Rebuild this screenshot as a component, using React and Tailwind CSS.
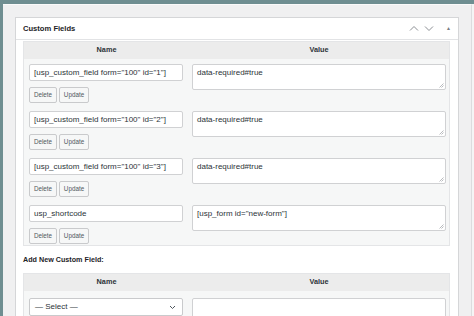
const ROWS = [
  { name: '[usp_custom_field form="100" id="1"]', value: 'data-required#true' },
  { name: '[usp_custom_field form="100" id="2"]', value: 'data-required#true' },
  { name: '[usp_custom_field form="100" id="3"]', value: 'data-required#true' },
  { name: 'usp_shortcode', value: '[usp_form id="new-form"]', last: true },
];

function Grip() {
  return (
    <svg className="absolute right-[1px] bottom-[1px]" width="5" height="5" viewBox="0 0 5 5">
      <path d="M4.5 0.5L0.5 4.5M4.5 2.5L2.5 4.5" stroke="#a7aaad" strokeWidth="0.8" />
    </svg>
  );
}

function TextBox({ value }) {
  return (
    <div className="relative w-[254px] h-[26px] bg-white border border-[#d0d1d3] rounded-[2px] px-[4px] pt-[3px] text-[8px] leading-[10px] text-[#2c3338]">
      {value}
      <Grip />
    </div>
  );
}

function SmallButton({ label, w }) {
  return (
    <div className={`${w} h-[16px] flex items-center justify-center bg-[#f6f7f7] border border-[#c9cacc] rounded-[2px] text-[6.3px] text-[#50575e]`}>
      {label}
    </div>
  );
}

function HeaderRow() {
  return (
    <div className="flex h-[17px] bg-[#ececec] text-[7.3px] font-bold text-[#2c3338]">
      <div className="w-[165px] flex items-center justify-center">Name</div>
      <div className="flex-1 flex items-center justify-center">Value</div>
    </div>
  );
}

function FieldRow({ name, value, last }) {
  return (
    <div className={`flex ${last ? 'h-[45px]' : 'h-[47px]'} pt-[5px]`}>
      <div className="w-[165px] pl-[5px] flex flex-col gap-[6px]">
        <div className="w-[154px] h-[17px] bg-white border border-[#d0d1d3] rounded-[2px] pl-[4px] flex items-center text-[8px] text-[#2c3338] whitespace-nowrap">
          {name}
        </div>
        <div className="flex gap-[2px]">
          <SmallButton label="Delete" w="w-[28px]" />
          <SmallButton label="Update" w="w-[30px]" />
        </div>
      </div>
      <div className="flex-1 pl-[3px]">
        <TextBox value={value} />
      </div>
    </div>
  );
}

function Chevron({ up }) {
  return (
    <svg width="10" height="7" viewBox="0 0 10 7" fill="none">
      <path d={up ? 'M1 5.5L5 1.5L9 5.5' : 'M1 1.5L5 5.5L9 1.5'} stroke="#8c8f94" strokeWidth="1" />
    </svg>
  );
}

export default function App() {
  return (
    <div className="w-[474px] h-[316px] overflow-hidden bg-[#6f8e91] pt-[4px] pl-[3px] font-['Liberation_Sans',Arial,sans-serif]">
      <div className="flex h-full">
        <div className="w-[469px] h-full bg-[#f0f0f1] border-t border-[#fafafa] border-r border-r-[#dcdcde] pl-[12px] pt-[12px]">
          <div className="w-[444px] h-[400px] bg-white border border-[#d5d6d8]">
            <div className="h-[22px] flex items-center border-b border-[#e2e3e5] pl-[7px] pr-[7px]">
              <span className="text-[7.6px] font-bold text-[#1d2327]">Custom Fields</span>
              <div className="ml-auto flex items-center gap-[5px]">
                <Chevron up />
                <Chevron />
                <span className="ml-[7px] text-[5px] text-[#787c82]">▲</span>
              </div>
            </div>
            <div className="pl-[7px] pt-[1px]">
              <div className="w-[427px] bg-[#f6f7f7] border border-[#e4e5e7]">
                <HeaderRow />
                {ROWS.map((r) => (
                  <FieldRow key={r.name} {...r} />
                ))}
              </div>
              <div className="h-[27px] pt-[2px] flex items-center text-[7.2px] font-bold text-[#1d2327]">
                Add New Custom Field:
              </div>
              <div className="w-[427px] h-[80px] bg-[#f6f7f7] border border-[#e4e5e7]">
                <HeaderRow />
                <div className="flex pt-[7px]">
                  <div className="w-[165px] pl-[5px]">
                    <div className="w-[154px] h-[18px] bg-white border border-[#c9cacc] rounded-[2px] pl-[5px] pr-[6px] flex items-center justify-between text-[8px] text-[#2c3338]">
                      <span>— Select —</span>
                      <svg width="7" height="5" viewBox="0 0 7 5" fill="none">
                        <path d="M1 1L3.5 3.5L6 1" stroke="#50575e" strokeWidth="1" />
                      </svg>
                    </div>
                  </div>
                  <div className="flex-1 pl-[3px]">
                    <TextBox value="" />
                  </div>
                </div>
              </div>
            </div>
          </div>
        </div>
        <div className="flex-1 h-full bg-[#f5f5f5]" />
      </div>
    </div>
  );
}
